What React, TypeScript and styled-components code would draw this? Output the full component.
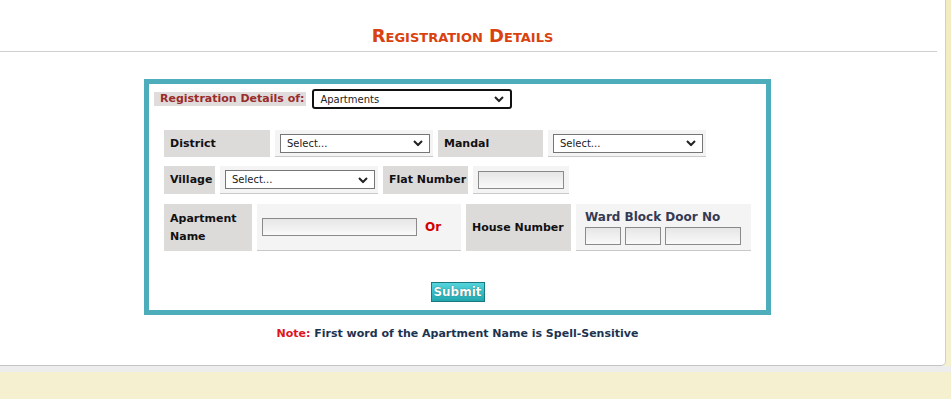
import React from "react";
import styled, { createGlobalStyle } from "styled-components";

const GlobalStyle = createGlobalStyle`
  html, body {
    margin: 0;
    padding: 0;
  }
  body {
    font-family: "DejaVu Sans", Verdana, sans-serif;
    background: #f4f0ca;
  }
`;

const Page = styled.div`
  width: 951px;
  height: 399px;
  overflow: hidden;
  background: linear-gradient(#f2ecbe, #f5f1d0);
`;

const Panel = styled.div`
  width: 945px;
  height: 365px;
  background: #fff;
  border-right: 1px solid #cfcfcf;
  border-bottom: 1px solid #c4c4c4;
  border-bottom-right-radius: 5px;
`;

const Strip = styled.div`
  height: 6px;
  background: #ededed;
`;

const Header = styled.div`
  padding-top: 25px;
  padding-bottom: 5px;
  border-bottom: 1px solid #cfcfcf;
  width: 937px;
`;

const Title = styled.h1`
  margin: 0;
  width: 925px;
  text-align: center;
  font-size: 18px;
  line-height: 21px;
  font-weight: bold;
  font-variant: small-caps;
  color: #d9420f;
`;

const Content = styled.div`
  width: 915px;
  display: flex;
  flex-direction: column;
  align-items: center;
`;

const FormBox = styled.div`
  box-sizing: border-box;
  width: 627px;
  height: 236px;
  margin-top: 27px;
  border: 5px solid #4eadba;
  padding: 5px 0 0 5px;
`;

const TopRow = styled.div`
  display: flex;
  align-items: center;
  gap: 6px;
`;

const TopLabel = styled.span`
  display: inline-block;
  background: #e0dcdc;
  color: #9a2b2b;
  font-size: 11px;
  font-weight: bold;
  line-height: 14px;
  padding: 0 2px 0 6px;
`;

const Row = styled.div<{ $top: number; $h: number }>`
  display: flex;
  gap: 5px;
  margin: ${(p) => p.$top}px 0 0 10px;
  height: ${(p) => p.$h}px;
`;

const LabelCell = styled.div<{ $w: number }>`
  box-sizing: border-box;
  width: ${(p) => p.$w}px;
  background: #dddada;
  color: #111;
  font-size: 11px;
  font-weight: bold;
  line-height: 18px;
  padding-left: 6px;
  display: flex;
  align-items: center;
`;

const FieldCell = styled.div<{ $w: number }>`
  box-sizing: border-box;
  width: ${(p) => p.$w}px;
  background: #f4f4f4;
  border-bottom: 1px solid #c9c9c9;
  display: flex;
  align-items: center;
  padding-left: 5px;
  gap: 8px;
`;

const WardCell = styled(FieldCell)`
  flex-direction: column;
  align-items: flex-start;
  justify-content: flex-start;
  padding: 5px 0 0 9px;
  gap: 2px;
`;

const WardTitle = styled.div`
  font-size: 12px;
  font-weight: bold;
  color: #353a55;
  line-height: 16px;
`;

const WardInputs = styled.div`
  display: flex;
  gap: 4px;
`;

const SelectWrap = styled.div<{ $w: number; $h: number; $strong?: boolean }>`
  position: relative;
  box-sizing: border-box;
  width: ${(p) => p.$w}px;
  height: ${(p) => p.$h}px;
  border: ${(p) => (p.$strong ? "2px solid #111" : "1px solid #767676")};
  border-radius: ${(p) => (p.$strong ? "3px" : "0")};
  background: #fff;
  display: flex;
  align-items: center;
`;

const NativeSelect = styled.select`
  appearance: none;
  -webkit-appearance: none;
  box-sizing: border-box;
  width: 100%;
  height: 13px;
  border: none;
  outline: none;
  background: transparent;
  font-family: "DejaVu Sans", Verdana, sans-serif;
  font-size: 10px;
  line-height: 13px;
  color: #222;
  padding: 0 0 0 6px;
  margin: 0;
`;

const Chevron = styled.svg`
  position: absolute;
  right: 6px;
  top: 50%;
  transform: translateY(-50%);
  pointer-events: none;
`;

const TextBox = styled.input<{ $w: number }>`
  box-sizing: border-box;
  width: ${(p) => p.$w}px;
  height: 18px;
  border: 1px solid #8a8a8a;
  background: linear-gradient(#e6e6e6, #f9f9f9);
  margin: 0;
  padding: 0;
`;

const OrText = styled.span`
  color: #d40000;
  font-size: 12px;
  font-weight: bold;
`;

const SubmitRow = styled.div`
  display: flex;
  justify-content: center;
  margin-top: 31px;
  padding-right: 5px;
`;

const SubmitButton = styled.button`
  box-sizing: border-box;
  width: 54px;
  height: 20px;
  border: 1px solid #1a7880;
  background: linear-gradient(#55d4dc, #22a6ae);
  color: #fff;
  font-family: "DejaVu Sans", Verdana, sans-serif;
  font-size: 12px;
  font-weight: bold;
  padding: 0;
  text-shadow: 0 0 1px #0a4a50;
`;

const Note = styled.p`
  margin: 12px 0 0;
  font-size: 11px;
  font-weight: bold;
  color: #1d3350;
`;

const NoteTag = styled.span`
  color: #e0141e;
`;

const Select = ({
  w,
  h,
  strong,
  value,
}: {
  w: number;
  h: number;
  strong?: boolean;
  value: string;
}) => (
  <SelectWrap $w={w} $h={h} $strong={strong}>
    <NativeSelect defaultValue={value}>
      <option>{value}</option>
    </NativeSelect>
    <Chevron width="10" height="7" viewBox="0 0 10 7">
      <path d="M1 1.5 L5 5.5 L9 1.5" fill="none" stroke="#222" strokeWidth="2" />
    </Chevron>
  </SelectWrap>
);

export default function App() {
  return (
    <Page>
      <GlobalStyle />
      <Panel>
        <Header>
          <Title>Registration Details</Title>
        </Header>
        <Content>
          <FormBox>
            <TopRow>
              <TopLabel>Registration Details of:</TopLabel>
              <Select w={200} h={20} strong value="Apartments" />
            </TopRow>

            <Row $top={21} $h={27}>
              <LabelCell $w={106}>District</LabelCell>
              <FieldCell $w={158}>
                <Select w={150} h={19} value="Select..." />
              </FieldCell>
              <LabelCell $w={105}>Mandal</LabelCell>
              <FieldCell $w={158}>
                <Select w={150} h={19} value="Select..." />
              </FieldCell>
            </Row>

            <Row $top={9} $h={28}>
              <LabelCell $w={51}>Village</LabelCell>
              <FieldCell $w={158}>
                <Select w={150} h={19} value="Select..." />
              </FieldCell>
              <LabelCell $w={85}>Flat Number</LabelCell>
              <FieldCell $w={96}>
                <TextBox $w={86} />
              </FieldCell>
            </Row>

            <Row $top={10} $h={47}>
              <LabelCell $w={88}>
                Apartment
                <br />
                Name
              </LabelCell>
              <FieldCell $w={204}>
                <TextBox $w={155} />
                <OrText>Or</OrText>
              </FieldCell>
              <LabelCell $w={105}>House Number</LabelCell>
              <WardCell $w={175}>
                <WardTitle>Ward Block Door No</WardTitle>
                <WardInputs>
                  <TextBox $w={36} />
                  <TextBox $w={36} />
                  <TextBox $w={76} />
                </WardInputs>
              </WardCell>
            </Row>

            <SubmitRow>
              <SubmitButton>Submit</SubmitButton>
            </SubmitRow>
          </FormBox>
          <Note>
            <NoteTag>Note:</NoteTag> First word of the Apartment Name is Spell-Sensitive
          </Note>
        </Content>
      </Panel>
      <Strip />
    </Page>
  );
}
